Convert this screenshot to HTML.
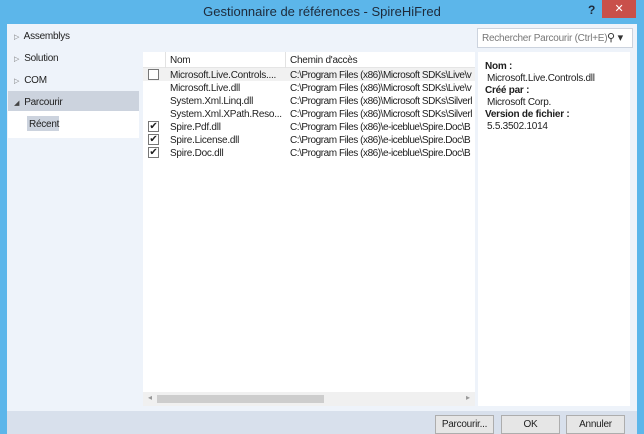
<!DOCTYPE html><html><head><style>
*{margin:0;padding:0;box-sizing:border-box}
body{width:644px;height:434px;overflow:hidden;background:#5cb6ea;font-family:"Liberation Sans",sans-serif;font-size:10px;letter-spacing:-0.25px;color:#1e1e1e;position:relative}
.a{position:absolute}
.t{white-space:nowrap}
</style></head><body>
<div class="a t" style="left:0;top:4px;width:644px;text-align:center;font-size:13px;letter-spacing:0;color:#1d2a3a">Gestionnaire de références - SpireHiFred</div>
<div class="a" style="left:588px;top:3px;font-size:12px;font-weight:bold;color:#1d2a3a">?</div>
<div class="a" style="left:602px;top:0;width:34px;height:18px;background:#c9504a;color:#fff;text-align:center;font-size:11px;line-height:18px">✕</div>
<div class="a" style="left:7px;top:24px;width:630px;height:387px;background:#eef3fa"></div>
<div class="a" style="left:7px;top:411px;width:630px;height:23px;background:#d8e0ec"></div>
<div class="a t" style="left:14px;top:31px"><span style="font-size:7px;color:#777">▷</span>&nbsp; Assemblys</div>
<div class="a t" style="left:14px;top:53px"><span style="font-size:7px;color:#777">▷</span>&nbsp; Solution</div>
<div class="a t" style="left:14px;top:75px"><span style="font-size:7px;color:#777">▷</span>&nbsp; COM</div>
<div class="a" style="left:8px;top:91px;width:131px;height:20px;background:#ccd3de"></div>
<div class="a t" style="left:14px;top:97px"><span style="font-size:7px;color:#444">◢</span>&nbsp; Parcourir</div>
<div class="a" style="left:8px;top:111px;width:131px;height:27px;background:#fff"></div>
<div class="a t" style="left:27px;top:116px;width:32px;height:15px;background:#ccd3de;padding:3px 2px">Récent</div>
<div class="a" style="left:477px;top:28px;width:156px;height:20px;background:#fff;border:1px solid #ccd3de;color:#777;padding:4px 4px;overflow:hidden" ><span class="t">Rechercher Parcourir (Ctrl+E)</span></div>
<div class="a" style="left:607px;top:29px;width:25px;height:18px;background:#fff;color:#333;font-size:11px;padding-top:2px">⚲ ▾</div>
<div class="a" style="left:143px;top:52px;width:332px;height:354px;background:#fff"></div>
<div class="a" style="left:143px;top:52px;width:332px;height:16px;border-bottom:1px solid #e5e5e5"></div>
<div class="a" style="left:165px;top:52px;width:1px;height:16px;background:#e2e2e2"></div>
<div class="a" style="left:285px;top:52px;width:1px;height:16px;background:#e2e2e2"></div>
<div class="a t" style="left:170px;top:55px">Nom</div>
<div class="a t" style="left:290px;top:55px">Chemin d'accès</div>
<div class="a" style="left:143px;top:68px;width:332px;height:13px;background:#f1f1f1"></div>
<div class="a" style="left:148px;top:69px;width:11px;height:11px;border:1px solid #777;background:#fff"></div>
<div class="a" style="left:148px;top:121px;width:11px;height:11px;border:1px solid #777;font-size:10px;line-height:9px;text-align:center">✔</div>
<div class="a" style="left:148px;top:134px;width:11px;height:11px;border:1px solid #777;font-size:10px;line-height:9px;text-align:center">✔</div>
<div class="a" style="left:148px;top:147px;width:11px;height:11px;border:1px solid #777;font-size:10px;line-height:9px;text-align:center">✔</div>
<div class="a" style="left:170px;top:69px;line-height:13px;width:112px;overflow:hidden">
<div class="t">Microsoft.Live.Controls....</div><div class="t">Microsoft.Live.dll</div><div class="t">System.Xml.Linq.dll</div><div class="t">System.Xml.XPath.Reso...</div><div class="t">Spire.Pdf.dll</div><div class="t">Spire.License.dll</div><div class="t">Spire.Doc.dll</div></div>
<div class="a" style="left:290px;top:69px;line-height:13px;width:185px;overflow:hidden;letter-spacing:-0.45px">
<div class="t">C:\Program Files (x86)\Microsoft SDKs\Live\v</div><div class="t">C:\Program Files (x86)\Microsoft SDKs\Live\v</div><div class="t">C:\Program Files (x86)\Microsoft SDKs\Silverl</div><div class="t">C:\Program Files (x86)\Microsoft SDKs\Silverl</div><div class="t">C:\Program Files (x86)\e-iceblue\Spire.Doc\B</div><div class="t">C:\Program Files (x86)\e-iceblue\Spire.Doc\B</div><div class="t">C:\Program Files (x86)\e-iceblue\Spire.Doc\B</div></div>
<div class="a" style="left:143px;top:392px;width:332px;height:14px;background:#f0f0f0"></div>
<div class="a" style="left:148px;top:393px;font-size:8px;color:#999">◂</div>
<div class="a" style="left:157px;top:395px;width:167px;height:8px;background:#cdcdcd"></div>
<div class="a" style="left:466px;top:393px;font-size:8px;color:#999">▸</div>
<div class="a" style="left:478px;top:52px;width:152px;height:354px;background:#fff"></div>
<div class="a" style="left:485px;top:61px;line-height:12px">
<div style="font-weight:bold">Nom :</div><div style="padding-left:2px">Microsoft.Live.Controls.dll</div>
<div style="font-weight:bold">Créé par :</div><div style="padding-left:2px">Microsoft Corp.</div>
<div style="font-weight:bold" class="t">Version de fichier :</div><div style="padding-left:2px">5.5.3502.1014</div></div>
<div class="a" style="left:435px;top:415px;width:59px;height:19px;background:#e6e6e6;border:1px solid #adadad;text-align:center;line-height:17px">Parcourir...</div>
<div class="a" style="left:501px;top:415px;width:59px;height:19px;background:#e6e6e6;border:1px solid #adadad;text-align:center;line-height:17px">OK</div>
<div class="a" style="left:566px;top:415px;width:59px;height:19px;background:#e6e6e6;border:1px solid #adadad;text-align:center;line-height:17px">Annuler</div>
</body></html>
